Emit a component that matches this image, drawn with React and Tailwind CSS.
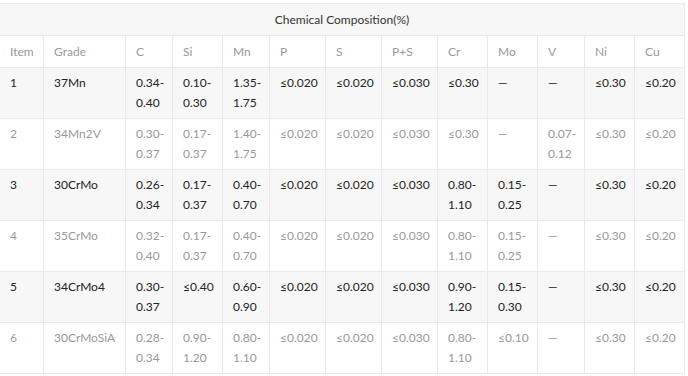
import React from "react";

const cols = ["Item", "Grade", "C", "Si", "Mn", "P", "S", "P+S", "Cr", "Mo", "V", "Ni", "Cu"];

const rows = [
  ["1", "37Mn", "0.34-\n0.40", "0.10-\n0.30", "1.35-\n1.75", "≤0.020", "≤0.020", "≤0.030", "≤0.30", "—", "—", "≤0.30", "≤0.20"],
  ["2", "34Mn2V", "0.30-\n0.37", "0.17-\n0.37", "1.40-\n1.75", "≤0.020", "≤0.020", "≤0.030", "≤0.30", "—", "0.07-\n0.12", "≤0.30", "≤0.20"],
  ["3", "30CrMo", "0.26-\n0.34", "0.17-\n0.37", "0.40-\n0.70", "≤0.020", "≤0.020", "≤0.030", "0.80-\n1.10", "0.15-\n0.25", "—", "≤0.30", "≤0.20"],
  ["4", "35CrMo", "0.32-\n0.40", "0.17-\n0.37", "0.40-\n0.70", "≤0.020", "≤0.020", "≤0.030", "0.80-\n1.10", "0.15-\n0.25", "—", "≤0.30", "≤0.20"],
  ["5", "34CrMo4", "0.30-\n0.37", "≤0.40", "0.60-\n0.90", "≤0.020", "≤0.020", "≤0.030", "0.90-\n1.20", "0.15-\n0.30", "—", "≤0.30", "≤0.20"],
  ["6", "30CrMoSiA", "0.28-\n0.34", "0.90-\n1.20", "0.80-\n1.10", "≤0.020", "≤0.020", "≤0.030", "0.80-\n1.10", "≤0.10", "—", "≤0.30", "≤0.20"],
];

const App = () => {
  return (
    <div className="bg-white pt-[3px] w-[688px] h-[376px] overflow-hidden" style={{ fontFamily: "Lato, 'Open Sans', sans-serif" }}>
      <div className="grid w-[685px] border-t border-[#e9e9e9] text-[12px] grid-cols-[44px_82px_47px_50px_47px_56px_56px_56px_50px_50px_47px_50px_50px]">
        {/* title row */}
        <div className="col-span-13 h-[32px] flex items-center justify-center bg-[#f7f7f7] border-r border-b border-[#e9e9e9] text-[#333]">
          Chemical Composition(%)
        </div>

        {/* column names */}
        {cols.map((c) => (
          <div
            key={c}
            className="h-[32px] flex items-center pl-[10px] border-r border-b border-[#e9e9e9] text-[#999]"
          >
            {c}
          </div>
        ))}

        {/* data */}
        {rows.map((r, i) =>
          r.map((v, j) => (
            <div
              key={i + "-" + j}
              className={`min-h-[51px] pl-[10px] pt-[5px] pb-[5px] leading-[20px] whitespace-pre-line border-r border-b border-[#e9e9e9] ${
                i % 2 === 0 ? "bg-[#f7f7f7] text-[#222]" : "bg-white text-[#999]"
              }`}
            >
              {v}
            </div>
          ))
        )}
      </div>
    </div>
  );
};

export default App;
